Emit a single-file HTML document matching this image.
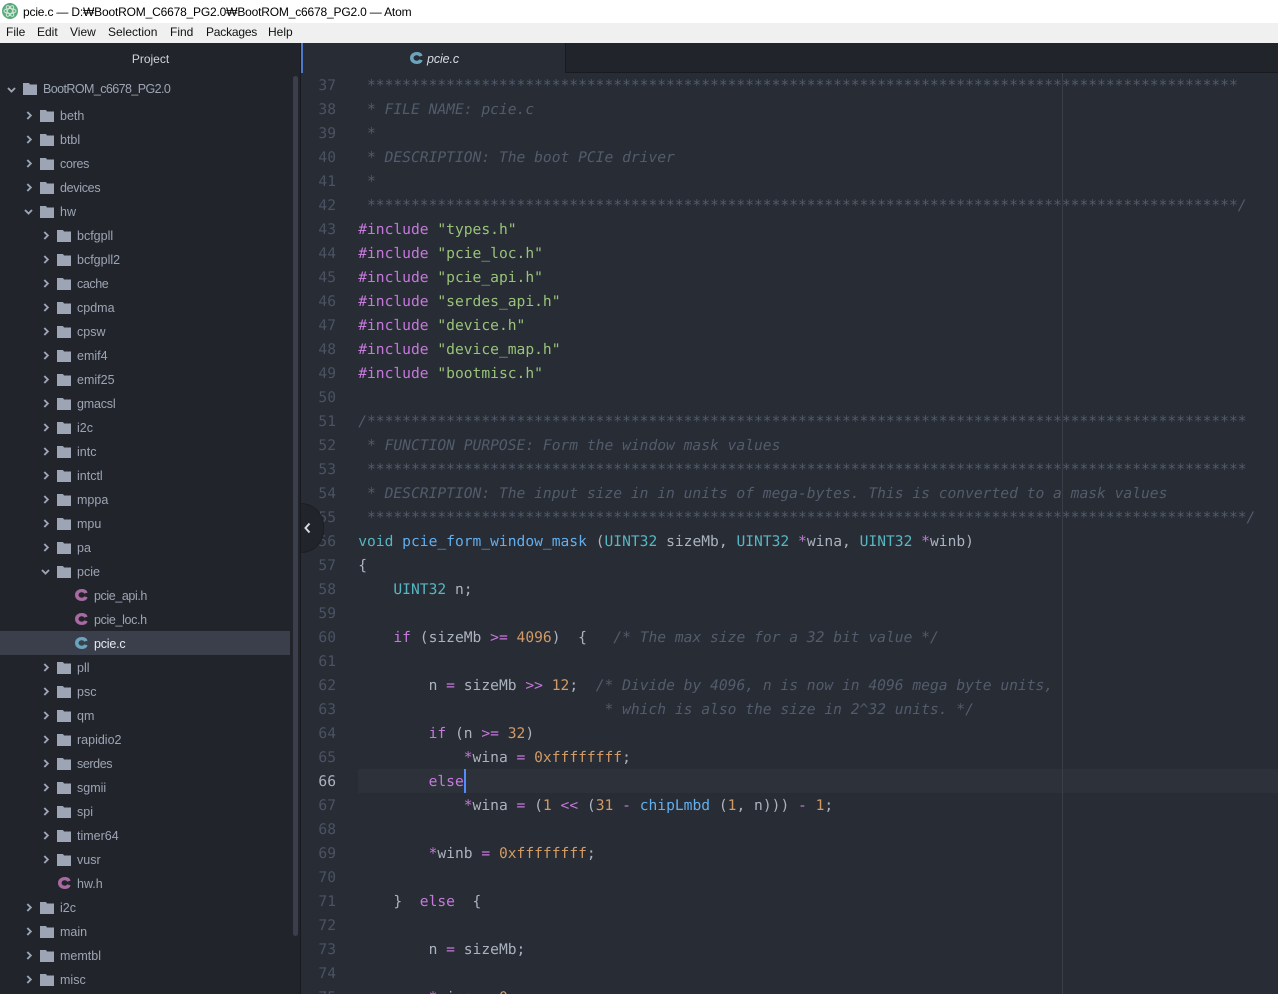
<!DOCTYPE html>
<html><head><meta charset="utf-8"><title>pcie.c — Atom</title>
<style>
html,body{margin:0;padding:0;width:1278px;height:994px;overflow:hidden;background:#282c34}
*{box-sizing:border-box}
#title{position:absolute;left:0;top:0;width:1278px;height:23px;background:#fff;color:#000;font:12px/24px "Liberation Sans","Noto Sans CJK KR",sans-serif;white-space:pre}
#title span{position:absolute;left:23px;top:0;letter-spacing:-.18px}
#title svg{position:absolute;left:2px;top:3px}
#menu{position:absolute;left:0;top:23px;width:1278px;height:20px;background:#f0f0f0;color:#111;font:12px/19px "Liberation Sans",sans-serif}
#menu span{position:absolute;top:0}
#side{position:absolute;left:0;top:43px;width:300px;height:951px;background:#21252b;overflow:hidden}
#sideb{position:absolute;left:300px;top:43px;width:1px;height:951px;background:#181a1f}
#proj{position:absolute;left:0;top:4px;width:301px;text-align:center;color:#d0d4db;font:12px/24px "Liberation Sans",sans-serif}
#sb{position:absolute;left:293px;top:33px;width:5px;height:860px;background:#3a3f4b;border-radius:3px}
.r{position:absolute;left:0;width:290px;height:24px;font:12.5px/24px "Liberation Sans",sans-serif;color:#9da5b4;white-space:pre}
.r svg{position:absolute}
.r span{position:absolute;top:1px}
.sel{background:#3a3f4b;color:#e6e9ee}
.ch{width:7px;height:9px;top:8px}
.chd{width:9px;height:6px;top:10px}
.fo{width:14px;height:12px;top:7px}
.fi{width:13px;height:12px;top:6px}
.a{left:26px}.b{left:43px}
.g{left:40px}.h{left:57px}
.p{color:#a86aa0}.q{color:#6aa5bd}
#tabs{position:absolute;left:301px;top:43px;width:977px;height:30px;background:#21252b}
#tabact{position:absolute;left:0;top:0;width:265px;height:30px;background:#282c34;border-right:1px solid #181a1f}
#tabline{position:absolute;left:265px;top:29px;width:712px;height:1px;background:#181a1f}
#tabbar{position:absolute;left:0;top:0;width:2px;height:30px;background:#4d78cc}
#tabtxt{position:absolute;left:126px;top:4px;color:#d7dae0;font:italic 12.5px/24px "Liberation Sans",sans-serif;letter-spacing:-.1px}
#tabs svg{position:absolute;left:109px;top:9px}
#ed{position:absolute;left:301px;top:73px;width:977px;height:921px;background:#282c34;overflow:hidden;font:14.62px/24px "DejaVu Sans Mono","Liberation Mono",monospace;color:#abb2bf;text-rendering:geometricPrecision}
#cl{position:absolute;left:57px;top:696px;width:920px;height:24px;background:#2c313a}
#guide{position:absolute;left:761px;top:0;width:1px;height:921px;background:#3a3f47}
#cur{position:absolute;left:163px;top:696px;width:2px;height:24px;background:#528bff}
.n{position:absolute;left:0;width:35px;text-align:right;color:#4b5263;height:24px;transform:translateY(1px)}
.l{position:absolute;left:57px;height:24px;white-space:pre;transform:translate(.2px,1px)}
.c{color:#525c6c;font-style:italic}
.k{color:#c678dd}.s{color:#98c379}.f{color:#61afef}.t{color:#56b6c2}.d{color:#d19a66}
#tog{position:absolute;left:301px;top:503px;width:23px;height:50px;background:#21252b;border:1px solid #1b1e23;border-left:0;border-radius:0 25px 25px 0}
#tog svg{position:absolute;left:2px;top:18px}
</style></head><body>
<svg width="0" height="0" style="position:absolute"><defs>
<symbol id="cr" viewBox="0 0 7 9"><path d="M1.3 1l3.5 3.5-3.5 3.5" fill="none" stroke="#9da5b4" stroke-width="1.9"/></symbol>
<symbol id="cd" viewBox="0 0 9 6"><path d="M1 1l3.5 3.5L8 1" fill="none" stroke="#9da5b4" stroke-width="1.9"/></symbol>
<symbol id="fd" viewBox="0 0 14 12"><path d="M0 0h6l1 1.5h7V12H0z" fill="#9da5b4"/></symbol>
<symbol id="cc" viewBox="0 0 13 12"><path d="M12.6 8.4C11.8 10.8 9.7 12 7 12 3 12 0 9.6 0 6 0 2.4 3 0 7 0c2.7 0 4.8 1.2 5.6 3.6L9.2 4.6C8.8 3.8 8 3.3 6.9 3.3 5 3.3 3.6 4.4 3.6 6c0 1.6 1.4 2.7 3.3 2.7 1.1 0 1.9-.5 2.3-1.3z" fill="currentColor"/></symbol>
</defs></svg>
<div id="title"><svg width="16" height="16" viewBox="0 0 16 16"><circle cx="8" cy="8" r="8" fill="#5aa97c"/><g fill="none" stroke="#cfe8d8" stroke-width="1"><ellipse cx="8" cy="8" rx="6" ry="2.5"/><ellipse cx="8" cy="8" rx="6" ry="2.5" transform="rotate(60 8 8)"/><ellipse cx="8" cy="8" rx="6" ry="2.5" transform="rotate(120 8 8)"/></g></svg><span>pcie.c — D:₩BootROM_C6678_PG2.0₩BootROM_c6678_PG2.0 — Atom</span></div>
<div id="menu"><span style="left:6px">File</span><span style="left:37px">Edit</span><span style="left:70px">View</span><span style="left:108px">Selection</span><span style="left:170px">Find</span><span style="left:206px;letter-spacing:-.2px">Packages</span><span style="left:268px">Help</span></div>
<div id="side">
<div id="proj">Project</div>
<div class="r" style="top:33px"><svg class="chd" style="left:7px;top:11px"><use href="#cd"/></svg><svg class="fo" style="left:23px"><use href="#fd"/></svg><span style="left:43px;letter-spacing:-.58px">BootROM_c6678_PG2.0</span></div>
<div class="r" style="top:60px"><svg class="ch a"><use href="#cr"/></svg><svg class="fo g"><use href="#fd"/></svg><span style="left:60px">beth</span></div>
<div class="r" style="top:84px"><svg class="ch a"><use href="#cr"/></svg><svg class="fo g"><use href="#fd"/></svg><span style="left:60px">btbl</span></div>
<div class="r" style="top:108px"><svg class="ch a"><use href="#cr"/></svg><svg class="fo g"><use href="#fd"/></svg><span style="left:60px;letter-spacing:-.3px">cores</span></div>
<div class="r" style="top:132px"><svg class="ch a"><use href="#cr"/></svg><svg class="fo g"><use href="#fd"/></svg><span style="left:60px;letter-spacing:-.3px">devices</span></div>
<div class="r" style="top:156px"><svg class="chd" style="left:24px"><use href="#cd"/></svg><svg class="fo g"><use href="#fd"/></svg><span style="left:60px">hw</span></div>
<div class="r" style="top:180px"><svg class="ch b"><use href="#cr"/></svg><svg class="fo h"><use href="#fd"/></svg><span style="left:77px">bcfgpll</span></div>
<div class="r" style="top:204px"><svg class="ch b"><use href="#cr"/></svg><svg class="fo h"><use href="#fd"/></svg><span style="left:77px">bcfgpll2</span></div>
<div class="r" style="top:228px"><svg class="ch b"><use href="#cr"/></svg><svg class="fo h"><use href="#fd"/></svg><span style="left:77px;letter-spacing:-.4px">cache</span></div>
<div class="r" style="top:252px"><svg class="ch b"><use href="#cr"/></svg><svg class="fo h"><use href="#fd"/></svg><span style="left:77px">cpdma</span></div>
<div class="r" style="top:276px"><svg class="ch b"><use href="#cr"/></svg><svg class="fo h"><use href="#fd"/></svg><span style="left:77px">cpsw</span></div>
<div class="r" style="top:300px"><svg class="ch b"><use href="#cr"/></svg><svg class="fo h"><use href="#fd"/></svg><span style="left:77px">emif4</span></div>
<div class="r" style="top:324px"><svg class="ch b"><use href="#cr"/></svg><svg class="fo h"><use href="#fd"/></svg><span style="left:77px">emif25</span></div>
<div class="r" style="top:348px"><svg class="ch b"><use href="#cr"/></svg><svg class="fo h"><use href="#fd"/></svg><span style="left:77px;letter-spacing:-.2px">gmacsl</span></div>
<div class="r" style="top:372px"><svg class="ch b"><use href="#cr"/></svg><svg class="fo h"><use href="#fd"/></svg><span style="left:77px">i2c</span></div>
<div class="r" style="top:396px"><svg class="ch b"><use href="#cr"/></svg><svg class="fo h"><use href="#fd"/></svg><span style="left:77px">intc</span></div>
<div class="r" style="top:420px"><svg class="ch b"><use href="#cr"/></svg><svg class="fo h"><use href="#fd"/></svg><span style="left:77px">intctl</span></div>
<div class="r" style="top:444px"><svg class="ch b"><use href="#cr"/></svg><svg class="fo h"><use href="#fd"/></svg><span style="left:77px">mppa</span></div>
<div class="r" style="top:468px"><svg class="ch b"><use href="#cr"/></svg><svg class="fo h"><use href="#fd"/></svg><span style="left:77px">mpu</span></div>
<div class="r" style="top:492px"><svg class="ch b"><use href="#cr"/></svg><svg class="fo h"><use href="#fd"/></svg><span style="left:77px">pa</span></div>
<div class="r" style="top:516px"><svg class="chd" style="left:41px"><use href="#cd"/></svg><svg class="fo h"><use href="#fd"/></svg><span style="left:77px">pcie</span></div>
<div class="r" style="top:540px"><svg class="fi p" style="left:75px"><use href="#cc"/></svg><span style="left:94px;letter-spacing:-.4px">pcie_api.h</span></div>
<div class="r" style="top:564px"><svg class="fi p" style="left:75px"><use href="#cc"/></svg><span style="left:94px;letter-spacing:-.35px">pcie_loc.h</span></div>
<div class="r sel" style="top:588px"><svg class="fi q" style="left:75px"><use href="#cc"/></svg><span style="left:94px;letter-spacing:-.2px">pcie.c</span></div>
<div class="r" style="top:612px"><svg class="ch b"><use href="#cr"/></svg><svg class="fo h"><use href="#fd"/></svg><span style="left:77px">pll</span></div>
<div class="r" style="top:636px"><svg class="ch b"><use href="#cr"/></svg><svg class="fo h"><use href="#fd"/></svg><span style="left:77px">psc</span></div>
<div class="r" style="top:660px"><svg class="ch b"><use href="#cr"/></svg><svg class="fo h"><use href="#fd"/></svg><span style="left:77px">qm</span></div>
<div class="r" style="top:684px"><svg class="ch b"><use href="#cr"/></svg><svg class="fo h"><use href="#fd"/></svg><span style="left:77px">rapidio2</span></div>
<div class="r" style="top:708px"><svg class="ch b"><use href="#cr"/></svg><svg class="fo h"><use href="#fd"/></svg><span style="left:77px;letter-spacing:-.4px">serdes</span></div>
<div class="r" style="top:732px"><svg class="ch b"><use href="#cr"/></svg><svg class="fo h"><use href="#fd"/></svg><span style="left:77px">sgmii</span></div>
<div class="r" style="top:756px"><svg class="ch b"><use href="#cr"/></svg><svg class="fo h"><use href="#fd"/></svg><span style="left:77px">spi</span></div>
<div class="r" style="top:780px"><svg class="ch b"><use href="#cr"/></svg><svg class="fo h"><use href="#fd"/></svg><span style="left:77px">timer64</span></div>
<div class="r" style="top:804px"><svg class="ch b"><use href="#cr"/></svg><svg class="fo h"><use href="#fd"/></svg><span style="left:77px">vusr</span></div>
<div class="r" style="top:828px"><svg class="fi p" style="left:58px"><use href="#cc"/></svg><span style="left:77px">hw.h</span></div>
<div class="r" style="top:852px"><svg class="ch a"><use href="#cr"/></svg><svg class="fo g"><use href="#fd"/></svg><span style="left:60px">i2c</span></div>
<div class="r" style="top:876px"><svg class="ch a"><use href="#cr"/></svg><svg class="fo g"><use href="#fd"/></svg><span style="left:60px">main</span></div>
<div class="r" style="top:900px"><svg class="ch a"><use href="#cr"/></svg><svg class="fo g"><use href="#fd"/></svg><span style="left:60px">memtbl</span></div>
<div class="r" style="top:924px"><svg class="ch a"><use href="#cr"/></svg><svg class="fo g"><use href="#fd"/></svg><span style="left:60px">misc</span></div>
<div id="sb"></div>
</div>
<div id="sideb"></div>
<div id="tabs"><div id="tabact"></div><div id="tabline"></div><div id="tabbar"></div><svg width="13" height="12" class="q"><use href="#cc"/></svg><div id="tabtxt">pcie.c</div></div>
<div id="ed">
<div id="cl"></div><div id="guide"></div>
<div class="n" style="top:0">37</div><div class="n" style="top:24px">38</div><div class="n" style="top:48px">39</div><div class="n" style="top:72px">40</div><div class="n" style="top:96px">41</div><div class="n" style="top:120px">42</div><div class="n" style="top:144px">43</div><div class="n" style="top:168px">44</div><div class="n" style="top:192px">45</div><div class="n" style="top:216px">46</div><div class="n" style="top:240px">47</div><div class="n" style="top:264px">48</div><div class="n" style="top:288px">49</div><div class="n" style="top:312px">50</div><div class="n" style="top:336px">51</div><div class="n" style="top:360px">52</div><div class="n" style="top:384px">53</div><div class="n" style="top:408px">54</div><div class="n" style="top:432px">55</div><div class="n" style="top:456px">56</div><div class="n" style="top:480px">57</div><div class="n" style="top:504px">58</div><div class="n" style="top:528px">59</div><div class="n" style="top:552px">60</div><div class="n" style="top:576px">61</div><div class="n" style="top:600px">62</div><div class="n" style="top:624px">63</div><div class="n" style="top:648px">64</div><div class="n" style="top:672px">65</div><div class="n" style="top:696px;color:#abb2bf">66</div><div class="n" style="top:720px">67</div><div class="n" style="top:744px">68</div><div class="n" style="top:768px">69</div><div class="n" style="top:792px">70</div><div class="n" style="top:816px">71</div><div class="n" style="top:840px">72</div><div class="n" style="top:864px">73</div><div class="n" style="top:888px">74</div><div class="n" style="top:912px">75</div>
<div class="l c" style="top:0"> ***************************************************************************************************</div>
<div class="l c" style="top:24px"> * FILE NAME: pcie.c</div>
<div class="l c" style="top:48px"> *</div>
<div class="l c" style="top:72px"> * DESCRIPTION: The boot PCIe driver</div>
<div class="l c" style="top:96px"> *</div>
<div class="l c" style="top:120px"> ***************************************************************************************************/</div>
<div class="l" style="top:144px"><span class="k">#include</span> <span class="s">"types.h"</span></div>
<div class="l" style="top:168px"><span class="k">#include</span> <span class="s">"pcie_loc.h"</span></div>
<div class="l" style="top:192px"><span class="k">#include</span> <span class="s">"pcie_api.h"</span></div>
<div class="l" style="top:216px"><span class="k">#include</span> <span class="s">"serdes_api.h"</span></div>
<div class="l" style="top:240px"><span class="k">#include</span> <span class="s">"device.h"</span></div>
<div class="l" style="top:264px"><span class="k">#include</span> <span class="s">"device_map.h"</span></div>
<div class="l" style="top:288px"><span class="k">#include</span> <span class="s">"bootmisc.h"</span></div>
<div class="l c" style="top:336px">/****************************************************************************************************</div>
<div class="l c" style="top:360px"> * FUNCTION PURPOSE: Form the window mask values</div>
<div class="l c" style="top:384px"> ****************************************************************************************************</div>
<div class="l c" style="top:408px"> * DESCRIPTION: The input size in in units of mega-bytes. This is converted to a mask values</div>
<div class="l c" style="top:432px"> ****************************************************************************************************/</div>
<div class="l" style="top:456px"><span class="t">void</span> <span class="f">pcie_form_window_mask</span> (<span class="t">UINT32</span> sizeMb, <span class="t">UINT32</span> <span class="k">*</span>wina, <span class="t">UINT32</span> <span class="k">*</span>winb)</div>
<div class="l" style="top:480px">{</div>
<div class="l" style="top:504px">    <span class="t">UINT32</span> n;</div>
<div class="l" style="top:552px">    <span class="k">if</span> (sizeMb <span class="k">&gt;=</span> <span class="d">4096</span>)  {   <span class="c">/* The max size for a 32 bit value */</span></div>
<div class="l" style="top:600px">        n <span class="k">=</span> sizeMb <span class="k">&gt;&gt;</span> <span class="d">12</span>;  <span class="c">/* Divide by 4096, n is now in 4096 mega byte units,</span></div>
<div class="l c" style="top:624px">                            * which is also the size in 2^32 units. */</div>
<div class="l" style="top:648px">        <span class="k">if</span> (n <span class="k">&gt;=</span> <span class="d">32</span>)</div>
<div class="l" style="top:672px">            <span class="k">*</span>wina <span class="k">=</span> <span class="d">0xffffffff</span>;</div>
<div class="l" style="top:696px">        <span class="k">else</span></div>
<div class="l" style="top:720px">            <span class="k">*</span>wina <span class="k">=</span> (<span class="d">1</span> <span class="k">&lt;&lt;</span> (<span class="d">31</span> <span class="k">-</span> <span class="f">chipLmbd</span> (<span class="d">1</span>, n))) <span class="k">-</span> <span class="d">1</span>;</div>
<div class="l" style="top:768px">        <span class="k">*</span>winb <span class="k">=</span> <span class="d">0xffffffff</span>;</div>
<div class="l" style="top:816px">    }  <span class="k">else</span>  {</div>
<div class="l" style="top:864px">        n <span class="k">=</span> sizeMb;</div>
<div class="l" style="top:912px">        <span class="k">*</span>wina <span class="k">=</span> <span class="d">0</span>;</div>
<div id="cur"></div>
</div>
<div id="tog"><svg width="9" height="12" viewBox="0 0 9 12"><path d="M6.5 1.5L2.5 6l4 4.5" fill="none" stroke="#d7dae0" stroke-width="2"/></svg></div>
</body></html>
